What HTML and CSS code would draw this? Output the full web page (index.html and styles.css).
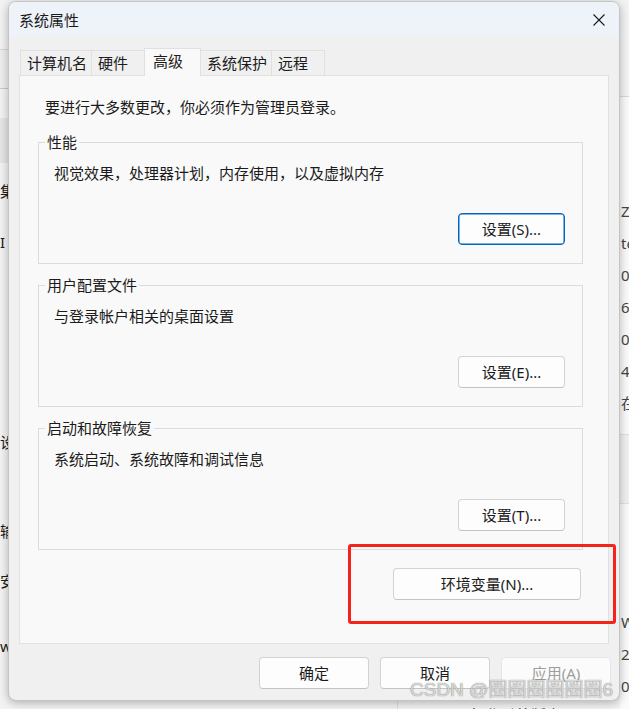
FILE: index.html
```html
<!DOCTYPE html>
<html lang="zh-CN">
<head>
    <meta charset="UTF-8">
    <title>系统属性</title>
    <link rel="stylesheet" href="styles.css">
</head>
<body>
    <div class="desktop">
        <!-- window behind the dialog, only its edges show -->
        <div class="behind-left">
            <div class="bl-top"></div>
            <div class="bl-bar"></div>
            <div class="bl-gap"></div>
            <div class="bl-band"></div>
            <div class="peek peek-1">集成</div>
            <div class="peek peek-2">I</div>
            <div class="peek peek-3">设备</div>
            <div class="peek peek-4">输入</div>
            <div class="peek peek-5">安装</div>
            <div class="peek peek-6">w</div>
        </div>

        <div class="dialog">
            <div class="titlebar">
                <span class="title">系统属性</span>
                <button class="close" aria-label="关闭">
                    <svg width="12" height="12" viewBox="0 0 12 12">
                        <path d="M0.5 0.5 L11.5 11.5 M11.5 0.5 L0.5 11.5" stroke="#1b1b1b" stroke-width="1.1" fill="none"/>
                    </svg>
                </button>
            </div>

            <div class="dialog-body">
                <div class="tabs">
                    <div class="tab">计算机名</div>
                    <div class="tab">硬件</div>
                    <div class="tab active">高级</div>
                    <div class="tab">系统保护</div>
                    <div class="tab">远程</div>
                </div>

                <div class="panel">
                    <p class="intro">要进行大多数更改，你必须作为管理员登录。</p>

                    <fieldset class="group">
                        <legend>性能</legend>
                        <div class="group-body">
                            <p class="desc">视觉效果，处理器计划，内存使用，以及虚拟内存</p>
                            <div class="group-actions">
                                <button class="btn focused">设置(S)...</button>
                            </div>
                        </div>
                    </fieldset>

                    <fieldset class="group">
                        <legend>用户配置文件</legend>
                        <div class="group-body">
                            <p class="desc">与登录帐户相关的桌面设置</p>
                            <div class="group-actions">
                                <button class="btn">设置(E)...</button>
                            </div>
                        </div>
                    </fieldset>

                    <fieldset class="group">
                        <legend>启动和故障恢复</legend>
                        <div class="group-body">
                            <p class="desc">系统启动、系统故障和调试信息</p>
                            <div class="group-actions">
                                <button class="btn">设置(T)...</button>
                            </div>
                        </div>
                    </fieldset>

                    <div class="env-row">
                        <div class="marked">
                            <button class="btn btn-env">环境变量(N)...</button>
                        </div>
                    </div>
                </div>

                <div class="footer">
                    <button class="btn btn-footer">确定</button>
                    <button class="btn btn-footer">取消</button>
                    <button class="btn btn-footer" disabled>应用(A)</button>
                </div>
            </div>
        </div>

        <div class="behind-right">
            <div class="br-top"></div>
            <div class="peek peek-r1">Z</div>
            <div class="peek">te</div>
            <div class="peek">0</div>
            <div class="peek">64</div>
            <div class="peek">03</div>
            <div class="peek">4</div>
            <div class="peek">在</div>
            <div class="br-band"></div>
            <div class="peek peek-r2">Wi</div>
            <div class="peek">2H</div>
            <div class="peek">02</div>
        </div>

        <div class="behind-bottom">
            <div class="bb-inner">操作系统版本</div>
        </div>

        <div class="watermark">CSDN @圈圈圈圈圈圈6</div>
    </div>
</body>
</html>
```

FILE: styles.css
```css
* {
    margin: 0;
    padding: 0;
    box-sizing: border-box;
}

body {
    width: 629px;
    height: 709px;
    overflow: hidden;
    background: #f3f3f3;
    font-family: "Noto Sans", "Noto Sans CJK SC", sans-serif;
    font-size: 15px;
    line-height: 20px;
    color: #1b1b1b;
}

.desktop {
    position: relative;
    display: grid;
    grid-template-columns: 8px 612px 9px;
    grid-template-rows: 1px 700px 8px;
    height: 709px;
}

/* ---- background window ---- */

.behind-left {
    grid-column: 1;
    grid-row: 1 / 4;
    overflow: hidden;
    white-space: nowrap;
    background: #f3f3f3;
}

.bl-top {
    height: 49px;
}

.bl-bar {
    height: 40px;
    background: #eeeeee;
    border-top: 1px solid #d6d6d6;
    border-bottom: 1px solid #c9c9c9;
}

.bl-gap {
    height: 29px;
}

.bl-band {
    height: 45px;
    background: #e6e6e6;
}

.peek {
    height: 20px;
    line-height: 20px;
    font-size: 15px;
    color: #1b1b1b;
}

.peek-1 { margin-top: 18px; }
.peek-2 { margin-top: 31px; }
.peek-3 { margin-top: 180px; }
.peek-4 { margin-top: 69px; }
.peek-5 { margin-top: 30px; }
.peek-6 { margin-top: 45px; }

.behind-right {
    grid-column: 3;
    grid-row: 1 / 4;
    overflow: hidden;
    white-space: nowrap;
    background: #fafafa;
    padding-left: 1px;
}

.behind-right .peek {
    margin-top: 12px;
    color: #444444;
}

.br-top {
    height: 97px;
    margin-left: -1px;
    background: #f3f3f3;
    border-bottom: 1px solid #d8d8d8;
}

.behind-right .peek-r1 { margin-top: 104px; }
.behind-right .peek-r2 { margin-top: 108px; }

.br-band {
    height: 70px;
    margin: 21px 0 0 -1px;
    background: #f0f0f0;
    border-top: 1px solid #e0e0e0;
    border-bottom: 1px solid #e0e0e0;
}

.behind-bottom {
    grid-column: 2;
    grid-row: 3;
    overflow: hidden;
    white-space: nowrap;
}

.bb-inner {
    margin-left: 389px;
    height: 8px;
    padding: 4px 0 0 73px;
    border-left: 1px solid #dcdcdc;
    line-height: 20px;
    color: #1b1b1b;
}

/* ---- dialog ---- */

.dialog {
    grid-column: 2;
    grid-row: 2;
    position: relative;
    z-index: 1;
    display: flex;
    flex-direction: column;
    background: #f0f0f0;
    border: 1px solid #c4c4c4;
    border-radius: 8px;
    overflow: hidden;
    box-shadow: 0 2px 10px rgba(0, 0, 0, 0.28);
}

.titlebar {
    height: 35px;
    flex-shrink: 0;
    display: flex;
    align-items: center;
    justify-content: space-between;
    padding-left: 10px;
    background: #eef3fa;
}

.title {
    font-size: 15px;
}

.close {
    width: 40px;
    height: 35px;
    display: flex;
    align-items: center;
    justify-content: center;
    background: none;
    border: none;
}

.dialog-body {
    flex: 1;
    display: flex;
    flex-direction: column;
    padding: 11px 10px 11px 10px;
}

.tabs {
    display: flex;
    align-items: flex-end;
    height: 28px;
    padding-left: 1px;
    margin-bottom: -1px;
    position: relative;
    z-index: 1;
}

.tab {
    height: 25px;
    min-width: 54px;
    padding: 2px 4px 0 6px;
    border: 1px solid #e0e0e0;
    border-bottom: none;
    margin-left: -1px;
    margin-bottom: 1px;
    background: #f0f0f0;
    white-space: nowrap;
}

.tab:first-child {
    margin-left: 0;
}

.tab.active {
    height: 28px;
    min-width: 57px;
    margin-bottom: 0;
    padding-left: 8px;
    background: #f9f9f9;
    position: relative;
    z-index: 1;
}

.panel {
    flex: 1;
    display: flex;
    flex-direction: column;
    background: #f9f9f9;
    border: 1px solid #e0e0e0;
    padding: 21px 25px 0 18px;
}

.intro {
    padding-left: 7px;
    margin-bottom: 15px;
}

.group {
    border: 1px solid #dcdcdc;
    margin: 0 0 11px 0;
    padding: 0;
    min-width: 0;
}

.group legend {
    margin-left: 6px;
    padding: 0 2px;
    line-height: 20px;
}

.group-body {
    padding: 11px 17px 18px 15px;
}

.group-actions {
    display: flex;
    justify-content: flex-end;
    margin-top: 30px;
}

.btn {
    font: inherit;
    color: #1b1b1b;
    height: 32px;
    width: 107px;
    background: #fdfdfd;
    border: 1px solid #d3d3d3;
    border-bottom-color: #c3c3c3;
    border-radius: 4px;
}

.btn.focused {
    border: 1px solid #0067c0;
    box-shadow: inset 0 0 0 0.5px #0067c0;
}

.env-row {
    display: flex;
    justify-content: flex-end;
    margin-top: 7px;
    padding-right: 2px;
}

.marked {
    position: relative;
}

/* red annotation box drawn around the button */
.marked::after {
    content: '';
    position: absolute;
    top: -24px;
    bottom: -24px;
    left: -45px;
    right: -35px;
    border: 3px solid #f5231b;
    border-radius: 3px;
    pointer-events: none;
}

.btn-env {
    width: 188px;
}

.footer {
    display: flex;
    justify-content: flex-end;
    gap: 11px;
    margin: 13px -2px 0 0;
}

.btn-footer {
    width: 110px;
}

.btn-footer:disabled {
    color: #9d9d9d;
    background: #fbfbfb;
    border-color: #e5e5e5;
}

.watermark {
    position: absolute;
    left: 410px;
    top: 678px;
    z-index: 2;
    font-family: "Liberation Sans", "Noto Sans CJK SC", sans-serif;
    font-size: 19px;
    line-height: 24px;
    color: rgba(236, 236, 236, 0.85);
    text-shadow: 0 0 1px rgba(70, 70, 70, 0.9);
    white-space: nowrap;
}
```
